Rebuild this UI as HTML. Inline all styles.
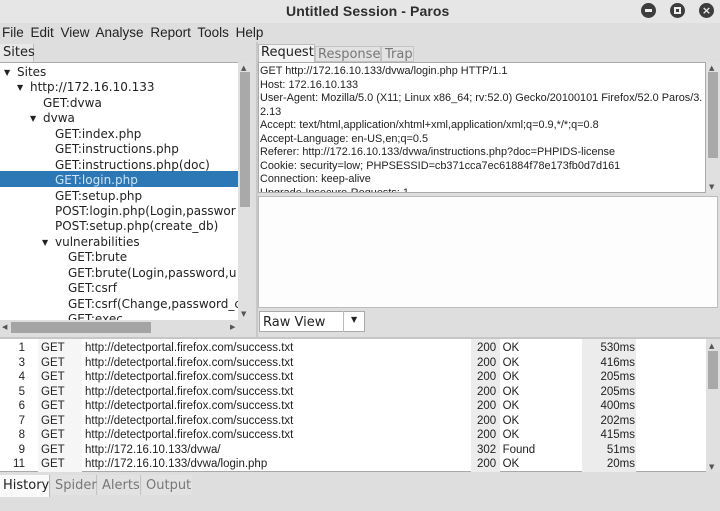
<!DOCTYPE html>
<html><head><meta charset="utf-8"><style>
*{margin:0;padding:0;box-sizing:border-box}
body{width:720px;height:511px;overflow:hidden;background:#dedede;font-family:"DejaVu Sans","Liberation Sans",sans-serif;color:#222;position:relative}
.a{position:absolute;white-space:nowrap}
.sb{position:absolute;background:#d4d4d4}
.th{position:absolute;background:#a9a9a9}
.arr{position:absolute;font-size:7px;color:#555}
.tr div{height:15.45px;line-height:15.45px;position:relative}
.tr i{font-style:normal;font-size:8px;position:absolute;top:0}
.r{position:relative;height:14.5px}.r span{position:absolute}
</style></head><body>
<div class="a" style="left:0;top:0;width:720px;height:23px;background:#e6e6e6"></div>
<div class="a" style="left:286px;top:3px;font-family:'Liberation Sans',sans-serif;font-size:14px;font-weight:bold;color:#2e2e2e;letter-spacing:0.1px">Untitled Session - Paros</div>
<div class="a" style="left:641px;top:3px;width:15px;height:15px;border-radius:50%;background:#3d3d3d"><div class="a" style="left:4px;top:6px;width:7px;height:3px;background:#eee"></div></div>
<div class="a" style="left:670px;top:3px;width:15px;height:15px;border-radius:50%;background:#3d3d3d"><div class="a" style="left:4px;top:4px;width:7px;height:7px;border:2px solid #eee"></div></div>
<div class="a" style="left:699px;top:3px;width:15px;height:15px;border-radius:50%;background:#3d3d3d;color:#eee;font-size:11px;font-weight:bold;text-align:center;line-height:15px">×</div>
<div class="a" style="left:2px;top:25px;font-family:'Liberation Sans',sans-serif;font-size:13.5px;word-spacing:3px">File Edit View Analyse Report Tools Help</div>
<div class="a" style="left:0;top:44px;width:34px;height:18px;background:#e8e8e8;border-right:1px solid #bbb"></div>
<div class="a" style="left:3px;top:45px;font-size:13px">Sites</div>
<!-- tree -->
<div class="a" style="left:0;top:62px;width:238px;height:258px;background:#fff;border-top:1px solid #aaa"></div>
<div class="a" style="left:0;top:171px;width:238px;height:16px;background:#2c78b6"></div>
<div class="a tr" style="left:0;top:65px;width:238px;overflow:hidden;height:255px;font-size:12px">
<div><i style="left:4px">▼</i><span style="position:absolute;left:17px">Sites</span></div>
<div><i style="left:17px">▼</i><span style="position:absolute;left:30px">http://172.16.10.133</span></div>
<div style="padding-left:43px">GET:dvwa</div>
<div><i style="left:30px">▼</i><span style="position:absolute;left:43px">dvwa</span></div>
<div style="padding-left:55px">GET:index.php</div>
<div style="padding-left:55px">GET:instructions.php</div>
<div style="padding-left:55px">GET:instructions.php(doc)</div>
<div style="padding-left:55px;color:#cfe3f5">GET:login.php</div>
<div style="padding-left:55px">GET:setup.php</div>
<div style="padding-left:55px">POST:login.php(Login,passwor</div>
<div style="padding-left:55px">POST:setup.php(create_db)</div>
<div><i style="left:42px">▼</i><span style="position:absolute;left:55px">vulnerabilities</span></div>
<div style="padding-left:68px">GET:brute</div>
<div style="padding-left:68px">GET:brute(Login,password,u</div>
<div style="padding-left:68px">GET:csrf</div>
<div style="padding-left:68px">GET:csrf(Change,password_c</div>
<div style="padding-left:68px">GET:exec</div>
</div>
<div class="a" style="left:0;top:320px;width:252px;height:15px;background:#dedede"></div>
<div class="sb" style="left:238px;top:62px;width:14px;height:258px;background:#e0e0e0"></div>
<div class="th" style="left:240px;top:72px;width:10px;height:135px"></div>
<div class="arr" style="left:241px;top:64px">▲</div><div class="arr" style="left:241px;top:310px">▼</div>
<div class="th" style="left:11px;top:322px;width:140px;height:11px;background:#a4a4a4"></div>
<div class="arr" style="left:2px;top:323px">◀</div><div class="arr" style="left:230px;top:323px">▶</div>
<!-- right tabs -->
<div class="a" style="left:256px;top:42px;width:2px;height:296px;background:#c8c8c8"></div>
<div class="a" style="left:258px;top:44px;width:57px;height:18px;background:#f4f4f4;border:1px solid #bbb;border-bottom:none"></div>
<div class="a" style="left:315px;top:46px;width:66px;height:16px;background:#e2e2e2;border:1px solid #c4c4c4"></div>
<div class="a" style="left:381px;top:46px;width:33px;height:16px;background:#e2e2e2;border:1px solid #c4c4c4"></div>
<div class="a" style="left:261px;top:45px;font-size:13px">Request</div>
<div class="a" style="left:318px;top:47px;font-size:13px;color:#777">Response</div>
<div class="a" style="left:385px;top:47px;font-size:13px;color:#777">Trap</div>
<div class="a" style="left:258px;top:62px;width:448px;height:131px;background:#fff;border:1px solid #aaa;overflow:hidden">
<div style="font-family:'Liberation Sans',sans-serif;font-size:10.9px;line-height:13.5px;padding:2px 0 0 1px;color:#222">
GET http://172.16.10.133/dvwa/login.php HTTP/1.1<br>Host: 172.16.10.133<br>User-Agent: Mozilla/5.0 (X11; Linux x86_64; rv:52.0) Gecko/20100101 Firefox/52.0 Paros/3.<br>2.13<br>Accept: text/html,application/xhtml+xml,application/xml;q=0.9,*/*;q=0.8<br>Accept-Language: en-US,en;q=0.5<br>Referer: http://172.16.10.133/dvwa/instructions.php?doc=PHPIDS-license<br>Cookie: security=low; PHPSESSID=cb371cca7ec61884f78e173fb0d7d161<br>Connection: keep-alive<br>Upgrade-Insecure-Requests: 1</div></div>
<div class="sb" style="left:706px;top:62px;width:14px;height:131px;background:#e0e0e0"></div>
<div class="th" style="left:708px;top:72px;width:10px;height:86px"></div>
<div class="arr" style="left:709px;top:64px">▲</div><div class="arr" style="left:709px;top:183px">▼</div>
<div class="a" style="left:258px;top:196px;width:460px;height:112px;background:#fdfdfd;border:1px solid #bbb"></div>
<div class="a" style="left:259px;top:311px;width:106px;height:21px;background:#fff;border:1px solid #aaa"></div>
<div class="a" style="left:343px;top:311px;width:1px;height:21px;background:#bbb"></div>
<div class="a" style="left:263px;top:315px;font-size:13px">Raw View</div>
<div class="a" style="left:351px;top:315px;font-size:8px">▼</div>
<!-- history table -->
<div class="a" style="left:0;top:337px;width:720px;height:2px;background:#c6c6c6"></div>
<div class="a" style="left:0;top:339px;width:706px;height:133px;background:#fff;border-bottom:1px solid #aaa"></div>
<div class="a" style="left:38px;top:339px;width:44px;height:133px;background:#f6f6f6"></div>
<div class="a" style="left:471px;top:339px;width:29px;height:133px;background:#ececec"></div>
<div class="a" style="left:582px;top:339px;width:54px;height:133px;background:#ececec"></div>
<div class="a" style="left:0;top:341px;font-family:'Liberation Sans',sans-serif;font-size:11.5px;line-height:14.5px;width:706px">
<div class="r"><span style="right:681px">1</span><span style="left:41px">GET</span><span style="left:85px">http://detectportal.firefox.com/success.txt</span><span style="left:477px">200&nbsp; OK</span><span style="right:71px">530ms</span></div>
<div class="r"><span style="right:681px">3</span><span style="left:41px">GET</span><span style="left:85px">http://detectportal.firefox.com/success.txt</span><span style="left:477px">200&nbsp; OK</span><span style="right:71px">416ms</span></div>
<div class="r"><span style="right:681px">4</span><span style="left:41px">GET</span><span style="left:85px">http://detectportal.firefox.com/success.txt</span><span style="left:477px">200&nbsp; OK</span><span style="right:71px">205ms</span></div>
<div class="r"><span style="right:681px">5</span><span style="left:41px">GET</span><span style="left:85px">http://detectportal.firefox.com/success.txt</span><span style="left:477px">200&nbsp; OK</span><span style="right:71px">205ms</span></div>
<div class="r"><span style="right:681px">6</span><span style="left:41px">GET</span><span style="left:85px">http://detectportal.firefox.com/success.txt</span><span style="left:477px">200&nbsp; OK</span><span style="right:71px">400ms</span></div>
<div class="r"><span style="right:681px">7</span><span style="left:41px">GET</span><span style="left:85px">http://detectportal.firefox.com/success.txt</span><span style="left:477px">200&nbsp; OK</span><span style="right:71px">202ms</span></div>
<div class="r"><span style="right:681px">8</span><span style="left:41px">GET</span><span style="left:85px">http://detectportal.firefox.com/success.txt</span><span style="left:477px">200&nbsp; OK</span><span style="right:71px">415ms</span></div>
<div class="r"><span style="right:681px">9</span><span style="left:41px">GET</span><span style="left:85px">http://172.16.10.133/dvwa/</span><span style="left:477px">302&nbsp; Found</span><span style="right:71px">51ms</span></div>
<div class="r"><span style="right:681px">11</span><span style="left:41px">GET</span><span style="left:85px">http://172.16.10.133/dvwa/login.php</span><span style="left:477px">200&nbsp; OK</span><span style="right:71px">20ms</span></div>
</div>
<div class="sb" style="left:706px;top:339px;width:14px;height:133px;background:#e0e0e0"></div>
<div class="th" style="left:708px;top:351px;width:10px;height:38px"></div>
<div class="arr" style="left:709px;top:342px">▲</div><div class="arr" style="left:709px;top:463px">▼</div>
<!-- bottom tabs -->
<div class="a" style="left:0;top:475px;width:50px;height:22px;background:#fafafa;border-right:1px solid #bbb"></div>
<div class="a" style="left:51px;top:475px;width:46px;height:20px;background:#e2e2e2;border-right:1px solid #c4c4c4"></div>
<div class="a" style="left:98px;top:475px;width:43px;height:20px;background:#e2e2e2;border-right:1px solid #c4c4c4"></div>
<div class="a" style="left:142px;top:475px;width:50px;height:20px;background:#e2e2e2"></div>
<div class="a" style="left:3px;top:478px;font-size:13px">History</div>
<div class="a" style="left:55px;top:478px;font-size:13px;color:#777">Spider</div>
<div class="a" style="left:102px;top:478px;font-size:13px;color:#777">Alerts</div>
<div class="a" style="left:146px;top:478px;font-size:13px;color:#777">Output</div>
</body></html>
